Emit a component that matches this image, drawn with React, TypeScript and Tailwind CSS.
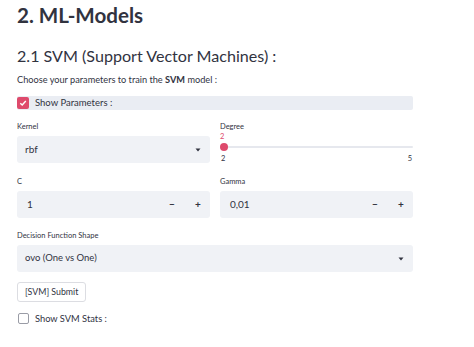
const font = { fontFamily: 'Lato, "Noto Sans", sans-serif' };

function Caret() {
  return (
    <svg width="6" height="4" viewBox="0 0 6 4" className="shrink-0">
      <path d="M0.5 0.5h5L3 3.6z" fill="#31333f" />
    </svg>
  );
}

function Label({ children }: { children: React.ReactNode }) {
  return <div className="mb-[5px] text-[7.5px] leading-[9px] text-[#31333f]">{children}</div>;
}

function NumberInput({ value }: { value: string }) {
  return (
    <div className="flex h-[27px] items-center rounded-[3px] bg-[#f0f2f6] pl-[10px] pr-[8px] text-[10px] text-[#31333f]">
      <span className="flex-1">{value}</span>
      <span className="mr-[18px] w-[8px] text-center text-[10px] font-bold">−</span>
      <span className="w-[8px] text-center text-[10px] font-bold">+</span>
    </div>
  );
}

export default function App() {
  return (
    <div className="min-h-[347px] bg-white pl-[17px] pr-[61px] text-[#31333f]" style={font}>
      <h1 className="pt-[1px] text-[20.6px] font-bold leading-[28px]">2. ML-Models</h1>
      <h2 className="mt-[15px] text-[16.1px] leading-[24px]">2.1 SVM (Support Vector Machines) :</h2>
      <p className="mt-[5px] text-[9.2px] leading-[14px]">
        Choose your parameters to train the <b>SVM</b> model :
      </p>

      <div className="mt-[9px] flex h-[14px] items-center gap-[6px] rounded-[2px] bg-[#eaedf3]">
        <span className="flex h-[12px] w-[12px] items-center justify-center rounded-[2px] bg-[#de4a6c]">
          <svg width="8" height="8" viewBox="0 0 8 8">
            <path d="M1.3 4.2 3.2 6 6.8 2" stroke="white" strokeWidth="1.4" fill="none" />
          </svg>
        </span>
        <span className="text-[9.5px] leading-none">Show Parameters :</span>
      </div>

      <div className="mt-[12px] grid grid-cols-2 gap-x-[10px]">
        <div>
          <Label>Kernel</Label>
          <div className="flex h-[27px] items-center rounded-[3px] bg-[#f0f2f6] pl-[8px] pr-[9px] text-[10px]">
            <span className="flex-1">rbf</span>
            <Caret />
          </div>
        </div>
        <div>
          <div className="mb-[1px] text-[7.5px] leading-[9px]">Degree</div>
          <div className="text-[7.5px] leading-[9px] text-[#de4a6c]">2</div>
          <div className="relative mt-[2px] h-[8px]">
            <div className="absolute left-0 right-0 top-[3px] h-[2px] rounded bg-[#e6e8ee]" />
            <div className="absolute left-0 top-0 h-[8px] w-[8px] rounded-full bg-[#de4a6c]" />
          </div>
          <div className="mt-[3px] flex justify-between px-[1px] text-[7.5px] leading-[9px]">
            <span>2</span>
            <span>5</span>
          </div>
        </div>
      </div>

      <div className="mt-[14px] grid grid-cols-2 gap-x-[10px]">
        <div>
          <Label>C</Label>
          <NumberInput value="1" />
        </div>
        <div>
          <Label>Gamma</Label>
          <NumberInput value="0,01" />
        </div>
      </div>

      <div className="mt-[13px]">
        <Label>Decision Function Shape</Label>
        <div className="flex h-[27px] items-center rounded-[3px] bg-[#f0f2f6] pl-[8px] pr-[9px] text-[9.5px]">
          <span className="flex-1">ovo (One vs One)</span>
          <Caret />
        </div>
      </div>

      <button className="mt-[10px] block h-[20px] rounded-[3px] border border-[#dcdde2] bg-white px-[7px] text-[8.8px] leading-none">
        [SVM] Submit
      </button>

      <div className="mt-[11px] flex items-center gap-[6px]">
        <span className="ml-[1px] h-[11px] w-[11px] rounded-[2px] border border-[#9a9ca6] bg-white" />
        <span className="text-[9.3px] leading-none">Show SVM Stats :</span>
      </div>
    </div>
  );
}
